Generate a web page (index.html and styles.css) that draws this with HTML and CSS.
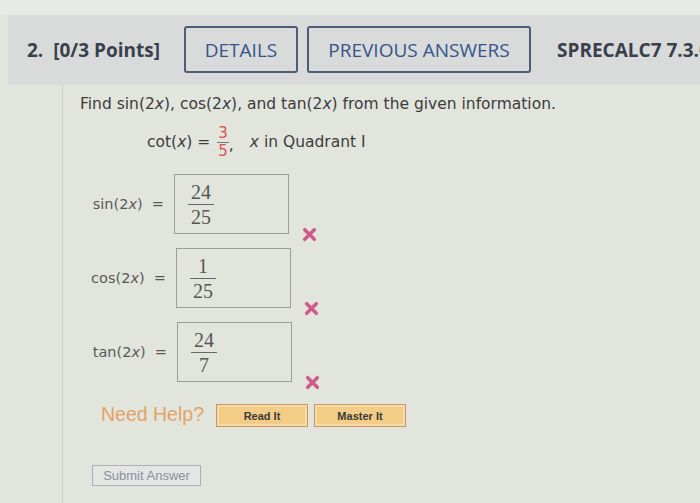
FILE: index.html
```html
<!DOCTYPE html>
<html>
<head>
<meta charset="utf-8">
<link rel="stylesheet" href="styles.css">
</head>
<body>
<div class="page">
  <div class="header">
    <div class="qnum">2.&nbsp; [0/3 Points]</div>
    <div class="hbtn details">DETAILS</div>
    <div class="hbtn prev">PREVIOUS ANSWERS</div>
    <div class="course">SPRECALC7 7.3.007.</div>
  </div>
  <div class="main">
    <div class="gutter"></div>
    <div class="content">
      <p class="find">Find sin(2<i>x</i>), cos(2<i>x</i>), and tan(2<i>x</i>) from the given information.</p>
      <div class="given">
        <span>cot(<i>x</i>) =</span>
        <span class="frac red"><span class="num">3</span><span class="den">5</span></span><span class="comma">,</span>
        <span class="quad"><i>x</i> in Quadrant I</span>
      </div>
      <div class="answers">
        <div class="row r1">
          <div class="label">sin(2<i>x</i>) &nbsp;=</div>
          <div class="box"><span class="sfrac"><span class="num">24</span><span class="den">25</span></span></div>
          <svg class="xmark" viewBox="0 0 14 14" width="15" height="15"><path d="M2.5 2.5 L11.5 11.5 M11.5 2.5 L2.5 11.5" stroke="#d0588a" stroke-width="3.2" stroke-linecap="round"/></svg>
        </div>
        <div class="row r2">
          <div class="label">cos(2<i>x</i>) &nbsp;=</div>
          <div class="box"><span class="sfrac"><span class="num">1</span><span class="den">25</span></span></div>
          <svg class="xmark" viewBox="0 0 14 14" width="15" height="15"><path d="M2.5 2.5 L11.5 11.5 M11.5 2.5 L2.5 11.5" stroke="#d0588a" stroke-width="3.2" stroke-linecap="round"/></svg>
        </div>
        <div class="row r3">
          <div class="label">tan(2<i>x</i>) &nbsp;=</div>
          <div class="box"><span class="sfrac"><span class="num">24</span><span class="den">7</span></span></div>
          <svg class="xmark" viewBox="0 0 14 14" width="15" height="15"><path d="M2.5 2.5 L11.5 11.5 M11.5 2.5 L2.5 11.5" stroke="#d0588a" stroke-width="3.2" stroke-linecap="round"/></svg>
        </div>
      </div>
      <div class="help">
        <span class="needhelp">Need Help?</span>
        <span class="hb">Read It</span>
        <span class="hb">Master It</span>
      </div>
      <div class="submit">Submit Answer</div>
    </div>
  </div>
</div>
</body>
</html>
```
FILE: styles.css
```css
html, body {
  margin: 0;
  padding: 0;
}
body {
  background: #e2e5dc;
  width: 700px;
  height: 503px;
  overflow: hidden;
}
.page {
  padding-top: 15px;
  background: linear-gradient(#e8eae6 0, #e8eae6 15px, #e2e5dc 15px);
  min-height: 488px;
}
.header {
  margin-left: 8px;
  height: 70px;
  background: #d8dbda;
  display: flex;
  align-items: center;
  padding-left: 19px;
  font-family: "Open Sans", sans-serif;
  white-space: nowrap;
  overflow: hidden;
}
.header > div { flex-shrink: 0; }
.qnum {
  font-weight: 700;
  font-size: 19px;
  color: #3a3f4e;
  width: 157px;
  margin-top: -1px;
}
.hbtn {
  height: 47px;
  box-sizing: border-box;
  border: 2px solid #4c5c7a;
  border-radius: 3px;
  display: flex;
  align-items: center;
  justify-content: center;
  font-size: 19px;
  color: #36548a;
  margin-top: -1px;
}
.details { width: 114px; margin-right: 9px; }
.prev { width: 224px; margin-right: 26px; }
.course {
  font-weight: 700;
  font-size: 19px;
  color: #3a3f4e;
  margin-top: -1px;
}
.main {
  display: flex;
}
.gutter {
  width: 62px;
  border-right: 1px solid #cfd3c7;
  min-height: 418px;
}
.content {
  padding-left: 17px;
  font-family: "DejaVu Sans", Verdana, sans-serif;
  color: #3c3c3c;
}
.find {
  margin: 8px 0 0 0;
  font-size: 15.5px;
  line-height: 22px;
}
.given {
  display: flex;
  align-items: center;
  margin-left: 67px;
  margin-top: 10px;
  font-size: 15.5px;
  height: 34px;
}
.frac {
  display: inline-flex;
  flex-direction: column;
  align-items: center;
  margin-left: 7px;
  font-size: 15px;
  line-height: 15px;
}
.frac .num { border-bottom: 1px solid #777; padding: 0 1px 1px; }
.frac .den { padding-top: 1px; }
.red { color: #d9534f; }
.comma { margin-right: 16px; align-self: center; margin-top: 6px; }
.answers {
  margin-top: 15px;
  display: flex;
  flex-direction: column;
  gap: 14px;
}
.row {
  display: flex;
  align-items: center;
  height: 60px;
  color: #585858;
}
.label {
  font-size: 14.5px;
  text-align: right;
  padding-right: 10px;
  box-sizing: border-box;
  margin-left: -13px;
}
.r1 .label { width: 107px; }
.r2 .label { width: 109px; }
.r3 .label { width: 110px; }
.box {
  width: 115px;
  height: 60px;
  box-sizing: border-box;
  border: 1px solid #9a9e98;
  display: flex;
  align-items: center;
  padding-left: 13px;
}
.sfrac {
  display: inline-flex;
  flex-direction: column;
  align-items: center;
  font-family: "Liberation Serif", "Times New Roman", serif;
  font-size: 20px;
  line-height: 20px;
  color: #555;
}
.sfrac .num { border-bottom: 1px solid #666; padding: 0 2px 2px; min-width: 22px; text-align: center; }
.sfrac .den { padding-top: 2px; }
.xmark {
  align-self: flex-end;
  margin-left: 13px;
  margin-bottom: -8px;
}
.help {
  display: flex;
  align-items: center;
  margin-top: 22px;
  margin-left: 21px;
  font-family: "Liberation Sans", Arial, sans-serif;
}
.needhelp {
  font-size: 19.5px;
  color: #e3a367;
  margin-right: 12px;
  margin-top: -3px;
}
.hb {
  width: 92px;
  height: 23px;
  box-sizing: border-box;
  border: 1px solid #c8966a;
  background: #f3cd87;
  box-shadow: inset 0 0 0 2px #f7dca6;
  display: flex;
  align-items: center;
  justify-content: center;
  font-weight: 700;
  font-size: 11px;
  color: #3a3a3a;
  margin-right: 6px;
}
.submit {
  margin-top: 38px;
  margin-left: 12px;
  width: 109px;
  height: 21px;
  box-sizing: border-box;
  border: 1px solid #aab0b8;
  background: #e4e6e4;
  font-family: "Liberation Sans", Arial, sans-serif;
  font-size: 13px;
  color: #8a8fa2;
  display: flex;
  align-items: center;
  justify-content: center;
}
```
